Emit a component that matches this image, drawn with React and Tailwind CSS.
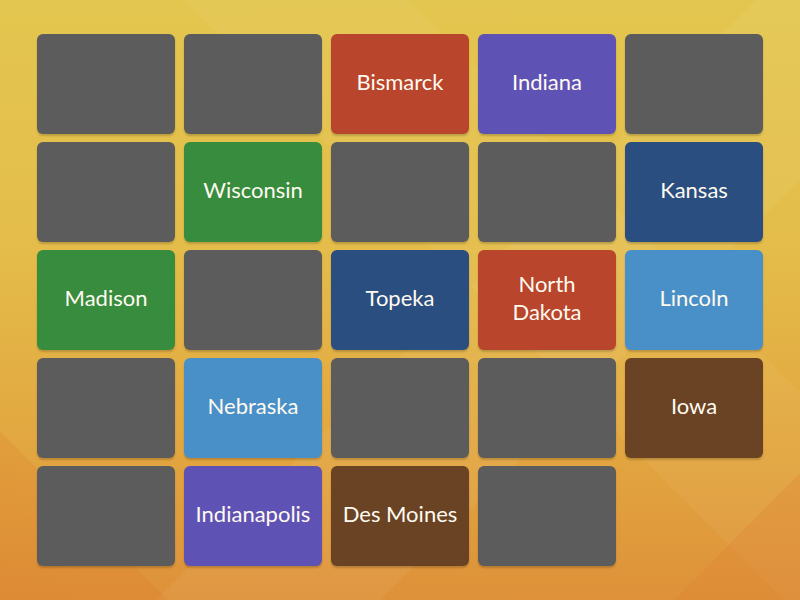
import React from "react";

const COLORS = {
    gray: "bg-[#5c5c5c]",
    red: "bg-[#b8452c]",
    purple: "bg-[#5f52b5]",
    green: "bg-[#378c3e]",
    navy: "bg-[#2a4e7f]",
    sky: "bg-[#4a90c8]",
    brown: "bg-[#6a4325]",
};

// 5x5 board, last cell left empty
const tiles = [
    { color: "gray" }, { color: "gray" }, { color: "red", label: "Bismarck" }, { color: "purple", label: "Indiana" }, { color: "gray" },
    { color: "gray" }, { color: "green", label: "Wisconsin" }, { color: "gray" }, { color: "gray" }, { color: "navy", label: "Kansas" },
    { color: "green", label: "Madison" }, { color: "gray" }, { color: "navy", label: "Topeka" }, { color: "red", label: "North\nDakota" }, { color: "sky", label: "Lincoln" },
    { color: "gray" }, { color: "sky", label: "Nebraska" }, { color: "gray" }, { color: "gray" }, { color: "brown", label: "Iowa" },
    { color: "gray" }, { color: "purple", label: "Indianapolis" }, { color: "brown", label: "Des Moines" }, { color: "gray" }, null,
];

const Tile = ({ tile }) => {
    if (!tile) return <div />;
    return (
        <div
            className={`${COLORS[tile.color]} rounded-[6px] shadow-[0_2px_2px_rgba(0,0,0,0.18)] flex items-center justify-center pb-[4px] text-center`}
        >
            {tile.label && (
                <span className="text-[#fffaf0] text-[22px] leading-[28px] whitespace-pre-line font-['Lato',sans-serif]">
                    {tile.label}
                </span>
            )}
        </div>
    );
};

export default function App() {
    return (
        <div className="relative w-[800px] h-[600px] overflow-hidden bg-[linear-gradient(180deg,#e3c64f_0%,#e4bd4a_40%,#e2a640_75%,#de9139_100%)]">
            {/* soft diagonal bands in the backdrop */}
            <div className="absolute inset-0 pointer-events-none bg-[linear-gradient(135deg,transparent_0%,transparent_54%,rgba(255,255,255,0.05)_54%,rgba(255,255,255,0.05)_70%,transparent_70%)]" />
            <div className="absolute inset-0 pointer-events-none bg-[linear-gradient(45deg,rgba(220,120,40,0.25)_0%,rgba(220,120,40,0.2)_12%,transparent_12%)]" />
            <div className="absolute inset-0 pointer-events-none bg-[linear-gradient(225deg,transparent_0%,transparent_28%,rgba(255,255,255,0.04)_28%,rgba(255,255,255,0.04)_44%,transparent_44%)]" />
            <div className="absolute inset-0 pointer-events-none bg-[linear-gradient(315deg,rgba(222,130,50,0.3)_0%,rgba(222,130,50,0.3)_9%,transparent_9%)]" />

            <div className="relative pt-[34px] pl-[37px] grid grid-cols-[repeat(5,138px)] grid-rows-[repeat(5,100px)] gap-x-[9px] gap-y-[8px]">
                {tiles.map((t, i) => (
                    <Tile key={i} tile={t} />
                ))}
            </div>
        </div>
    );
}
